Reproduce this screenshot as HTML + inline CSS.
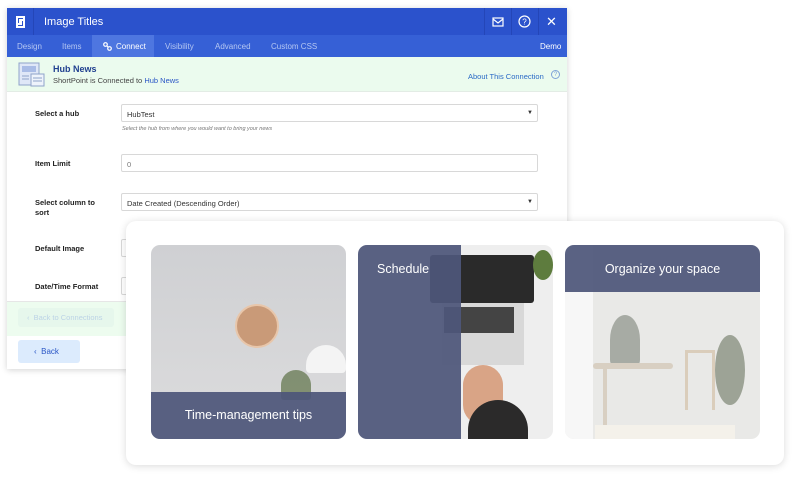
<!DOCTYPE html>
<html><head><meta charset="utf-8"><style>
*{box-sizing:border-box;margin:0;padding:0}
body{width:800px;height:481px;background:#fff;font-family:"Liberation Sans",sans-serif;position:relative;overflow:hidden}
.panel{position:absolute;left:7px;top:8px;width:560px;height:361px;background:#fff;box-shadow:0 1px 6px rgba(0,0,0,.18);overflow:hidden}
.hdr{height:27px;background:#2b52cc;color:#fff;position:relative}
.hdr .logo{position:absolute;left:0;top:0;width:27px;height:27px;border-right:1px solid #2446b8}
.hdr .t{position:absolute;left:37px;top:8px;font-size:11px}
.hdr .ic{position:absolute;top:0;width:26px;height:27px;border-left:1px solid #2446b8;color:#fff;font-size:12px;text-align:center;line-height:27px}
.tabs{height:22px;background:#3660d6;color:#b5c7f2;font-size:8px;position:relative}
.tabs span{position:absolute;top:7px}
.tabs .act{background:#4e76e0;color:#fff;top:0;height:22px;left:85px;width:62px}
.green{height:35px;background:#ebfbee;position:relative;border-bottom:1px solid #e3ece5}
.lbl{position:absolute;font-size:7.5px;font-weight:bold;color:#222;left:28px}
.inp{position:absolute;left:114px;width:417px;height:18px;border:1px solid #d8d8d8;border-radius:2px;font-size:7.5px;color:#333;padding:5px 5px}
.card{position:absolute;left:126px;top:221px;width:658px;height:244px;background:#fff;border-radius:10px;box-shadow:0 1px 8px rgba(0,0,0,.15)}
.tile{position:absolute;top:24px;width:195px;height:194px;border-radius:9px;overflow:hidden}
.ov{position:absolute;background:rgba(78,86,122,.93);color:#fff;font-size:12.5px}
</style></head><body>
<div class="panel">
 <div class="hdr">
  <div class="logo"><svg width="27" height="27"><path d="M10 18V9h7v3h-4v4" stroke="#fff" stroke-width="2" fill="none"/><path d="M17 10v9h-7v-3h4v-4" stroke="#fff" stroke-width="2" fill="none"/></svg></div>
  <div class="t">Image Titles</div>
  <div class="ic" style="left:477px"><svg width="12" height="10" style="margin-top:9px"><rect x="1" y="1" width="10" height="8" stroke="#fff" fill="none" stroke-width="1.2"/><path d="M1 2l5 4 5-4" stroke="#fff" fill="none" stroke-width="1.2"/></svg></div>
  <div class="ic" style="left:504px"><svg width="13" height="13" style="margin-top:7px"><circle cx="6.5" cy="6.5" r="5.5" stroke="#fff" fill="none" stroke-width="1.2"/><text x="6.5" y="9.5" font-size="8" fill="#fff" text-anchor="middle" font-family="Liberation Sans">?</text></svg></div>
  <div class="ic" style="left:531px;font-size:13px">✕</div>
 </div>
 <div class="tabs">
  <span style="left:10px">Design</span><span style="left:55px">Items</span>
  <span class="act"><svg width="9" height="9" style="position:absolute;left:11px;top:7px"><circle cx="2.5" cy="2.5" r="1.8" stroke="#fff" fill="none" stroke-width="1.2"/><circle cx="6.5" cy="6.5" r="1.8" stroke="#fff" fill="none" stroke-width="1.2"/><path d="M3.5 3.5l2 2" stroke="#fff" stroke-width="1.2"/></svg><b style="position:absolute;left:24px;top:7px;font-weight:normal">Connect</b></span>
  <span style="left:158px">Visibility</span><span style="left:208px">Advanced</span><span style="left:264px">Custom CSS</span>
  <span style="left:533px;color:#fff">Demo</span>
 </div>
 <div class="green">
  <svg width="28" height="26" style="position:absolute;left:11px;top:5px"><rect x="1" y="1" width="20" height="22" fill="#dfe7f7" stroke="#8fa3c9"/><rect x="4" y="4" width="14" height="6" fill="#a9bce6"/><rect x="13" y="12" width="13" height="12" fill="#eef3fb" stroke="#8fa3c9"/><path d="M4 14h7M4 17h7M15 16h9M15 19h9" stroke="#8fa3c9"/></svg>
  <div style="position:absolute;left:46px;top:7px;font-size:9px;font-weight:bold;color:#1f3f8f">Hub News</div>
  <div style="position:absolute;left:46px;top:19px;font-size:7.5px;color:#444">ShortPoint is Connected to <span style="color:#2a56c6">Hub News</span></div>
  <div style="position:absolute;left:461px;top:15px;font-size:7.5px;color:#2a6ac6">About This Connection</div>
  <div style="position:absolute;left:544px;top:13px;width:9px;height:9px;border:1px solid #7fa3d8;border-radius:50%;font-size:6px;color:#7fa3d8;text-align:center;line-height:8px">?</div>
 </div>
 <div class="lbl" style="top:101px">Select a hub</div>
 <div class="inp" style="top:96px">HubTest<span style="position:absolute;right:4px;font-size:6px">▼</span></div>
 <div style="position:absolute;left:115px;top:118px;font-size:5.5px;font-style:italic;color:#777">Select the hub from where you would want to bring your news</div>
 <div class="lbl" style="top:151px">Item Limit</div>
 <div class="inp" style="top:146px;color:#777">0</div>
 <div class="lbl" style="top:190px;line-height:10px">Select column to<br>sort</div>
 <div class="inp" style="top:185px">Date Created (Descending Order)<span style="position:absolute;right:4px;font-size:6px">▼</span></div>
 <div class="lbl" style="top:236px">Default Image</div>
 <div class="inp" style="top:231px;width:20px"></div>
 <div class="lbl" style="top:274px">Date/Time Format</div>
 <div class="inp" style="top:269px;width:20px"></div>
 <div style="position:absolute;left:0;top:293px;width:560px;height:35px;background:#edfcef;border-top:1px solid #e6e6e6">
  <div style="position:absolute;left:11px;top:6px;width:96px;height:19px;background:#e6f7ec;border-radius:3px;font-size:7.5px;color:#bcd3e6;padding:5px 0 0 9px">‹&nbsp; Back to Connections</div>
 </div>
 <div style="position:absolute;left:11px;top:332px;width:62px;height:23px;background:#dcebfd;border-radius:3px;font-size:8px;color:#2a56c6;padding:7px 0 0 16px">‹&nbsp; Back</div>
</div>

<div class="card">
 <div class="tile" style="left:25px;background:linear-gradient(#cfd0d3,#dcdcdd)">
  <div style="position:absolute;left:84px;top:59px;width:44px;height:44px;border-radius:50%;background:#c99a78;border:2px solid #e8c6aa"></div>
  <div style="position:absolute;left:155px;top:100px;width:40px;height:28px;background:#f4f4f4;border-radius:20px 20px 4px 4px"></div>
  <div style="position:absolute;left:130px;top:125px;width:30px;height:30px;background:#6c7d58;border-radius:50% 50% 10% 10%;opacity:.8"></div>
  <div class="ov" style="left:0;bottom:0;width:195px;height:47px;text-align:center;padding-top:16px">Time-management tips</div>
 </div>
 <div class="tile" style="left:232px;background:#eeeeee">
  <div style="position:absolute;left:72px;top:10px;width:104px;height:48px;background:#2a2a2a;border-radius:3px"></div>
  <div style="position:absolute;left:84px;top:58px;width:82px;height:62px;background:#d8d8d8"></div>
  <div style="position:absolute;left:86px;top:62px;width:70px;height:26px;background:#444"></div>
  <div style="position:absolute;left:105px;top:120px;width:40px;height:60px;background:#d9a486;border-radius:20px"></div>
  <div style="position:absolute;left:110px;top:155px;width:60px;height:40px;background:#2b2a2a;border-radius:30px 30px 0 0"></div>
  <div style="position:absolute;left:175px;top:5px;width:20px;height:30px;background:#5e7c3e;border-radius:50%"></div>
  <div class="ov" style="left:0;top:0;width:103px;height:194px;padding:17px 0 0 19px;white-space:nowrap;overflow:visible">Schedule</div>
 </div>
 <div class="tile" style="left:439px;background:#e9e9e7">
  <div style="position:absolute;left:0;top:0;width:28px;height:194px;background:#f7f7f7"></div>
  <div style="position:absolute;left:45px;top:70px;width:30px;height:50px;background:#8a9088;border-radius:50% 50% 10% 10%;opacity:.7"></div>
  <div style="position:absolute;left:28px;top:118px;width:80px;height:6px;background:#d8cfc2;border-radius:3px"></div>
  <div style="position:absolute;left:38px;top:124px;width:4px;height:60px;background:#d8cfc2"></div>
  <div style="position:absolute;left:120px;top:105px;width:30px;height:60px;border:3px solid #dacdbb;border-bottom:none"></div>
  <div style="position:absolute;left:150px;top:90px;width:30px;height:70px;background:#7c8473;border-radius:50%;opacity:.7"></div>
  <div style="position:absolute;left:30px;top:180px;width:140px;height:14px;background:#f4f1ea"></div>
  <div class="ov" style="left:0;top:0;width:195px;height:47px;text-align:center;padding-top:17px">Organize your space</div>
 </div>
</div>
</body></html>
